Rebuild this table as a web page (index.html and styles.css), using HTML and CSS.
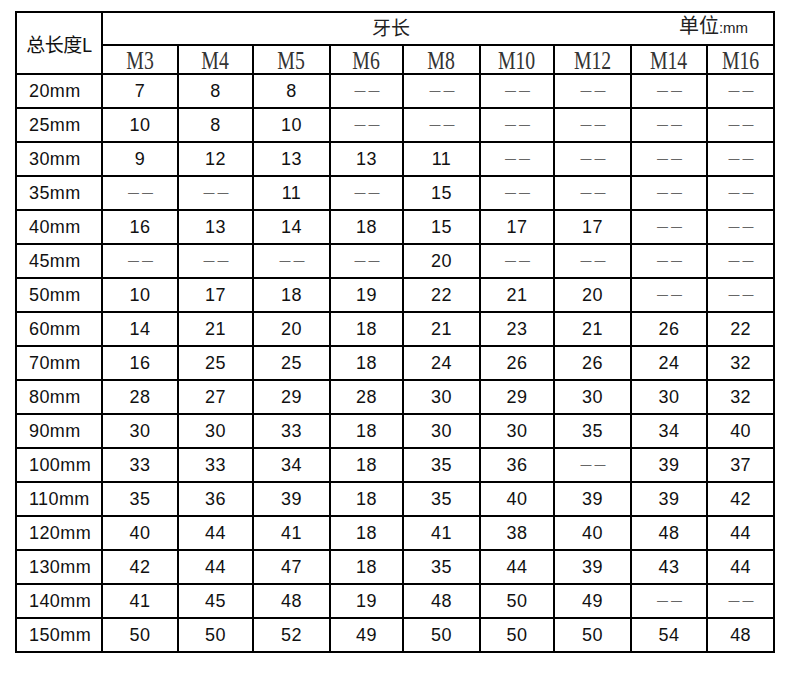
FILE: index.html
```html
<!DOCTYPE html>
<html lang="zh">
<head>
<meta charset="utf-8">
<link rel="stylesheet" href="styles.css">
</head>
<body>
<table class="spec">
  <colgroup>
    <col class="c-len"><col class="c76"><col class="c75"><col class="c77"><col class="c73"><col class="c77"><col class="c74"><col class="c77"><col class="c76"><col class="c67">
  </colgroup>
  <thead>
    <tr class="h1">
      <th rowspan="2" class="len-head">总长度L</th>
      <th colspan="9" class="span-head"><div class="span-inner"><span class="title">牙长</span><span class="unit">单位<small>:mm</small></span></div></th>
    </tr>
    <tr class="h2">
      <th><span class="m">M3</span></th><th><span class="m">M4</span></th><th><span class="m">M5</span></th><th><span class="m">M6</span></th><th><span class="m">M8</span></th><th><span class="m">M10</span></th><th><span class="m">M12</span></th><th><span class="m">M14</span></th><th><span class="m">M16</span></th>
    </tr>
  </thead>
  <tbody>
    <tr><td>20mm</td><td>7</td><td>8</td><td>8</td><td class="d">－－</td><td class="d">－－</td><td class="d">－－</td><td class="d">－－</td><td class="d">－－</td><td class="d">－－</td></tr>
    <tr><td>25mm</td><td>10</td><td>8</td><td>10</td><td class="d">－－</td><td class="d">－－</td><td class="d">－－</td><td class="d">－－</td><td class="d">－－</td><td class="d">－－</td></tr>
    <tr><td>30mm</td><td>9</td><td>12</td><td>13</td><td>13</td><td>11</td><td class="d">－－</td><td class="d">－－</td><td class="d">－－</td><td class="d">－－</td></tr>
    <tr><td>35mm</td><td class="d">－－</td><td class="d">－－</td><td>11</td><td class="d">－－</td><td>15</td><td class="d">－－</td><td class="d">－－</td><td class="d">－－</td><td class="d">－－</td></tr>
    <tr><td>40mm</td><td>16</td><td>13</td><td>14</td><td>18</td><td>15</td><td>17</td><td>17</td><td class="d">－－</td><td class="d">－－</td></tr>
    <tr><td>45mm</td><td class="d">－－</td><td class="d">－－</td><td class="d">－－</td><td class="d">－－</td><td>20</td><td class="d">－－</td><td class="d">－－</td><td class="d">－－</td><td class="d">－－</td></tr>
    <tr><td>50mm</td><td>10</td><td>17</td><td>18</td><td>19</td><td>22</td><td>21</td><td>20</td><td class="d">－－</td><td class="d">－－</td></tr>
    <tr><td>60mm</td><td>14</td><td>21</td><td>20</td><td>18</td><td>21</td><td>23</td><td>21</td><td>26</td><td>22</td></tr>
    <tr><td>70mm</td><td>16</td><td>25</td><td>25</td><td>18</td><td>24</td><td>26</td><td>26</td><td>24</td><td>32</td></tr>
    <tr><td>80mm</td><td>28</td><td>27</td><td>29</td><td>28</td><td>30</td><td>29</td><td>30</td><td>30</td><td>32</td></tr>
    <tr><td>90mm</td><td>30</td><td>30</td><td>33</td><td>18</td><td>30</td><td>30</td><td>35</td><td>34</td><td>40</td></tr>
    <tr><td>100mm</td><td>33</td><td>33</td><td>34</td><td>18</td><td>35</td><td>36</td><td class="d">－－</td><td>39</td><td>37</td></tr>
    <tr><td>110mm</td><td>35</td><td>36</td><td>39</td><td>18</td><td>35</td><td>40</td><td>39</td><td>39</td><td>42</td></tr>
    <tr><td>120mm</td><td>40</td><td>44</td><td>41</td><td>18</td><td>41</td><td>38</td><td>40</td><td>48</td><td>44</td></tr>
    <tr><td>130mm</td><td>42</td><td>44</td><td>47</td><td>18</td><td>35</td><td>44</td><td>39</td><td>43</td><td>44</td></tr>
    <tr><td>140mm</td><td>41</td><td>45</td><td>48</td><td>19</td><td>48</td><td>50</td><td>49</td><td class="d">－－</td><td class="d">－－</td></tr>
    <tr><td>150mm</td><td>50</td><td>50</td><td>52</td><td>49</td><td>50</td><td>50</td><td>50</td><td>54</td><td>48</td></tr>
  </tbody>
</table>
</body>
</html>
```

FILE: styles.css
```css
html, body {
  margin: 0;
  padding: 0;
  background: #ffffff;
}

body {
  padding: 11px 0 0 15px;
  font-family: "Liberation Sans", Arial, "Noto Sans CJK SC", sans-serif;
  color: #111;
}

.spec {
  border-collapse: collapse;
  table-layout: fixed;
  width: 760px;
}

.c-len { width: 86px; }
.c76 { width: 76px; }
.c75 { width: 75px; }
.c77 { width: 77px; }
.c73 { width: 73px; }
.c74 { width: 74px; }
.c67 { width: 67px; }

.spec th,
.spec td {
  border: 2px solid #000;
  padding: 0;
  text-align: center;
  font-weight: normal;
  white-space: nowrap;
  overflow: visible;
}

.h1 th { height: 31px; }
.h2 th { height: 27px; }
.spec tbody td {
  height: 32px;
  font-size: 18px;
  line-height: 20px;
  letter-spacing: 0.4px;
}

.len-head {
  font-family: "Noto Sans CJK SC", sans-serif;
  font-size: 19px;
  letter-spacing: -0.5px;
}

.span-head {
  border-bottom: 2px solid #000;
}

.span-inner {
  display: flex;
  align-items: center;
  font-family: "Noto Sans CJK SC", sans-serif;
  font-size: 19px;
  line-height: 24px;
  margin-top: -4px;
  color: #222;
}

.title {
  width: 602px;
  text-align: center;
}

.unit {
  margin-left: auto;
  padding-right: 25px;
  font-size: 20px;
}

.unit small {
  font-family: "Liberation Sans", Arial, sans-serif;
  font-size: 15px;
}

.m {
  display: inline-block;
  font-family: "Liberation Serif", "Times New Roman", serif;
  font-size: 26px;
  line-height: 26px;
  transform: scaleX(0.76);
  color: #333;
  position: relative;
  top: 1px;
}

.spec tbody td:first-child {
  text-align: left;
  padding-left: 12px;
}

.spec td.d {
  font-family: "Noto Sans CJK SC", sans-serif;
  font-size: 15px;
  color: #666;
  letter-spacing: -1px;
}
```
